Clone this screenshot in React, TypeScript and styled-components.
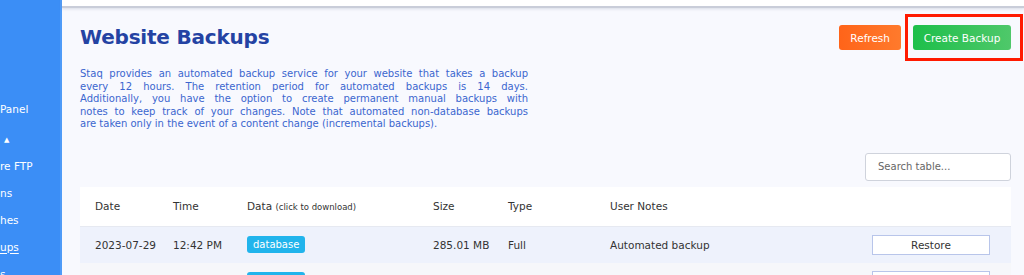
import styled, { createGlobalStyle } from "styled-components";

const GlobalStyle = createGlobalStyle`
  html, body {
    margin: 0;
    padding: 0;
    background: #f8f9fe;
    overflow: hidden;
  }
  body {
    font-family: "DejaVu Sans", "Open Sans", sans-serif;
    color: #333;
  }
  * {
    box-sizing: border-box;
  }
`;

const Page = styled.div`
  display: flex;
  width: 1024px;
  height: 275px;
  overflow: hidden;
`;

const Sidebar = styled.aside`
  width: 62px;
  flex-shrink: 0;
  background: #3b8ef6;
  border-right: 2px solid #4f9bf8;
  overflow: hidden;
  padding-top: 95px;
  color: #fff;
`;

const NavItem = styled.div<{ $active?: boolean }>`
  height: 27px;
  display: flex;
  align-items: center;
  font-size: 10.5px;
  white-space: nowrap;
  text-decoration: ${(p) => (p.$active ? "underline" : "none")};
  text-underline-offset: 2px;
`;

const NavToggle = styled.div`
  margin-top: 6px;
  height: 24px;
  display: flex;
  align-items: center;
  padding-left: 4px;
  font-size: 7px;
`;

const Main = styled.main`
  flex: 1;
  display: flex;
  flex-direction: column;
  min-width: 0;
`;

const TopBar = styled.div`
  height: 8px;
  background: #ffffff;
  border-bottom: 2px solid #c9cdd9;
  box-shadow: 0 1px 3px rgba(120, 130, 160, 0.25);
  flex-shrink: 0;
`;

const Content = styled.div`
  padding: 16px 13px 0 18px;
`;

const Header = styled.div`
  display: flex;
  justify-content: space-between;
  align-items: flex-start;
`;

const Intro = styled.div`
  width: 448px;
`;

const Title = styled.h1`
  margin: 0;
  font-size: 20px;
  line-height: 26px;
  font-weight: 700;
  color: #2443a3;
  letter-spacing: -0.2px;
`;

const Description = styled.p`
  margin: 18px 0 0;
  font-size: 10px;
  line-height: 12.5px;
  color: #3b66cf;
`;

const Line = styled.span<{ $last?: boolean }>`
  display: block;
  white-space: nowrap;
  text-align: justify;
  text-align-last: ${(p) => (p.$last ? "left" : "justify")};
`;

const Actions = styled.div`
  display: flex;
  gap: 12px;
  padding-top: 1px;
`;

const Button = styled.button<{ $tone: "orange" | "green" }>`
  position: relative;
  height: 25px;
  padding: 0 11px;
  border: none;
  border-radius: 3px;
  font-family: inherit;
  font-size: 10.5px;
  white-space: nowrap;
  color: #fff;
  cursor: pointer;
  background: ${(p) =>
    p.$tone === "orange"
      ? "linear-gradient(90deg, #ff6419, #ff7a2c)"
      : "linear-gradient(90deg, #1dbf4a, #4fc86a)"};
`;

const Highlighted = styled(Button)`
  width: 98px;
  padding: 0;
  &::after {
    content: "";
    position: absolute;
    top: -11px;
    bottom: -11px;
    left: -8px;
    right: -12px;
    border: 3px solid #ff1a00;
    pointer-events: none;
  }
`;

const Toolbar = styled.div`
  display: flex;
  justify-content: flex-end;
  margin-top: 22px;
`;

const Search = styled.input`
  width: 146px;
  height: 28px;
  border: 1px solid #cfd3dc;
  border-radius: 3px;
  background: #fff;
  padding: 0 12px;
  font-family: inherit;
  font-size: 10px;
  color: #333;
  &::placeholder {
    color: #666;
  }
`;

const Table = styled.div`
  margin-top: 6px;
`;

const Row = styled.div<{ $variant: "head" | "even" | "odd" }>`
  display: grid;
  grid-template-columns: 78px 74px 186px 75px 102px 1fr 118px;
  align-items: center;
  padding: 0 21px 0 15px;
  height: ${(p) => (p.$variant === "head" ? "40px" : "36px")};
  font-size: 10.5px;
  color: #333;
  background: ${(p) =>
    p.$variant === "head" ? "#ffffff" : p.$variant === "even" ? "#eef2fc" : "#f6f7fa"};
  border-bottom: ${(p) => (p.$variant === "head" ? "1px solid #e6e9f1" : "none")};
`;

const Hint = styled.span`
  font-size: 8.5px;
`;

const Badge = styled.span`
  justify-self: start;
  display: inline-flex;
  align-items: center;
  height: 17px;
  padding: 0 6px;
  border-radius: 3px;
  background: #21b4ec;
  color: #fff;
  font-size: 10px;
`;

const Restore = styled.button`
  height: 20px;
  border: 1px solid #b8c5ea;
  background: #fff;
  font-family: inherit;
  font-size: 10.5px;
  color: #333;
  cursor: pointer;
`;

const rows = [
  { date: "2023-07-29", time: "12:42 PM", size: "285.01 MB", type: "Full", notes: "Automated backup" },
  { date: "2023-07-28", time: "12:42 PM", size: "284.87 MB", type: "Full", notes: "Automated backup" },
];

const App = () => {
  return (
    <>
      <GlobalStyle />
      <Page>
        <Sidebar>
          <NavItem>Panel</NavItem>
          <NavToggle>▲</NavToggle>
          <NavItem>re FTP</NavItem>
          <NavItem>ns</NavItem>
          <NavItem>hes</NavItem>
          <NavItem $active>ups</NavItem>
          <NavItem>s</NavItem>
        </Sidebar>
        <Main>
          <TopBar />
          <Content>
            <Header>
              <Intro>
                <Title>Website Backups</Title>
                <Description>
                  <Line>Staq provides an automated backup service for your website that takes a backup</Line>
                  <Line>every 12 hours. The retention period for automated backups is 14 days.</Line>
                  <Line>Additionally, you have the option to create permanent manual backups with</Line>
                  <Line>notes to keep track of your changes. Note that automated non-database backups</Line>
                  <Line $last>are taken only in the event of a content change (incremental backups).</Line>
                </Description>
              </Intro>
              <Actions>
                <Button $tone="orange">Refresh</Button>
                <Highlighted $tone="green">Create Backup</Highlighted>
              </Actions>
            </Header>
            <Toolbar>
              <Search placeholder="Search table..." />
            </Toolbar>
            <Table>
              <Row $variant="head">
                <span>Date</span>
                <span>Time</span>
                <span>
                  Data <Hint>(click to download)</Hint>
                </span>
                <span>Size</span>
                <span>Type</span>
                <span>User Notes</span>
                <span />
              </Row>
              {rows.map((r, i) => (
                <Row key={i} $variant={i % 2 === 0 ? "even" : "odd"}>
                  <span>{r.date}</span>
                  <span>{r.time}</span>
                  <Badge>database</Badge>
                  <span>{r.size}</span>
                  <span>{r.type}</span>
                  <span>{r.notes}</span>
                  <Restore>Restore</Restore>
                </Row>
              ))}
            </Table>
          </Content>
        </Main>
      </Page>
    </>
  );
};

export default App;
